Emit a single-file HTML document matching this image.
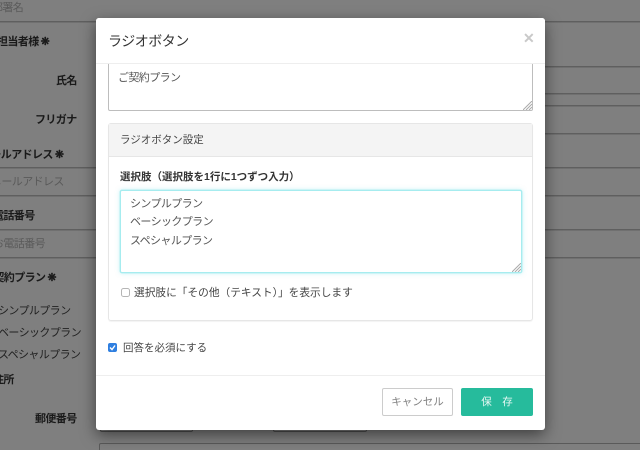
<!DOCTYPE html>
<html lang="ja">
<head>
<meta charset="utf-8">
<style>
html,body{margin:0;padding:0;width:640px;height:450px;overflow:hidden;background:#7f7f7f;}
*{box-sizing:border-box;}
body{font-family:"Liberation Sans","Noto Sans CJK JP",sans-serif;position:relative;color:#333;}
#wrap{position:absolute;left:0;top:0;width:640px;height:450px;overflow:hidden;filter:blur(.35px);}
.a{position:absolute;white-space:nowrap;line-height:16px;}
.ln{position:absolute;height:1px;background:#5f5f5f;box-shadow:0 1px 0 #707070;}
.bg{font-size:11px;letter-spacing:-.6px;color:#1a1a1a;font-weight:bold;}
.ph{font-size:11px;letter-spacing:-.6px;color:#5a5a5a;}
.rd{font-size:11px;letter-spacing:-.6px;color:#222;}
.t{font-size:11px;letter-spacing:-.6px;color:#555;}
#modal{position:absolute;left:96px;top:18px;width:449px;height:412px;background:#fff;border-radius:3px;box-shadow:0 5px 15px rgba(0,0,0,.5);overflow:hidden;}
.ta{position:absolute;background:#fff;}
.rz{position:absolute;right:0;bottom:0;}
</style>
</head>
<body>
<div id="wrap">
<!-- background page -->
<div class="ln" style="left:0;top:21px;width:640px"></div>
<div class="ln" style="left:545px;top:66px;width:95px"></div>
<div class="ln" style="left:545px;top:93px;width:95px"></div>
<div class="ln" style="left:545px;top:105px;width:95px"></div>
<div class="ln" style="left:545px;top:133px;width:95px"></div>
<div class="ln" style="left:0;top:167px;width:640px"></div>
<div class="ln" style="left:0;top:195px;width:640px"></div>
<div class="ln" style="left:0;top:229px;width:640px"></div>
<div class="ln" style="left:0;top:257px;width:640px"></div>
<div class="a ph" style="left:-8px;top:0px">部署名</div>
<div class="a bg" style="left:-3px;top:34px">担当者様<span style="margin-left:2px">❋</span></div>
<div class="a bg" style="left:56px;top:73px">氏名</div>
<div class="a bg" style="left:35px;top:112px">フリガナ</div>
<div class="a bg" style="left:-20px;top:147px">メールアドレス<span style="margin-left:2px">❋</span></div>
<div class="a ph" style="left:-9px;top:174px">メールアドレス</div>
<div class="a bg" style="left:-7px;top:208px">電話番号</div>
<div class="a ph" style="left:-7px;top:236px">お電話番号</div>
<div class="a bg" style="left:-17px;top:270px">ご契約プラン<span style="margin-left:2px">❋</span></div>
<div class="a rd" style="left:-2px;top:303px">シンプルプラン</div>
<div class="a rd" style="left:-2px;top:325px">ベーシックプラン</div>
<div class="a rd" style="left:-2px;top:347px">スペシャルプラン</div>
<div class="a bg" style="left:-7px;top:372px">住所</div>
<div class="a bg" style="left:35px;top:411px">郵便番号</div>
<div style="position:absolute;left:100px;top:420px;width:93px;height:12px;border:1px solid #4f4f4f;border-radius:2px"></div>
<div style="position:absolute;left:273px;top:420px;width:94px;height:12px;border:1px solid #4f4f4f;border-radius:2px"></div>
<div style="position:absolute;left:99px;top:443px;width:560px;height:20px;border:1px solid #5a5a5a;border-radius:2px"></div>

<!-- modal -->
<div id="modal">
  <!-- top textarea -->
  <div class="ta" style="left:12px;top:30px;width:425px;height:63px;border:1px solid #bdbdbd;border-radius:2px">
    <div class="a t" style="left:9px;top:21px">ご契約プラン</div>
    <svg class="rz" width="9" height="9" viewBox="0 0 9 9"><path d="M0 9L9 0M3 9L9 3M6 9L9 6" stroke="#aaa" stroke-width="1" fill="none"/></svg>
  </div>
  <!-- header -->
  <div style="position:absolute;left:0;top:0;width:449px;height:46px;background:#fff;border-bottom:1px solid #eee"></div>
  <div class="a" style="left:12px;top:14px;font-size:14px;letter-spacing:-.5px;line-height:18px;color:#333">ラジオボタン</div>
  <div class="a" style="left:427px;top:12px;font-size:14px;font-weight:bold;color:#c9c9c9">✕</div>
  <!-- panel -->
  <div style="position:absolute;left:12px;top:105px;width:425px;height:198px;border:1px solid #e6e6e6;border-radius:3px;box-shadow:0 1px 1px rgba(0,0,0,.05)">
    <div style="position:absolute;left:0;top:0;width:423px;height:33px;background:#f4f4f4;border-bottom:1px solid #e6e6e6"></div>
    <div class="a" style="left:11px;top:8px;font-size:10.5px;color:#444">ラジオボタン設定</div>
    <div class="a" style="left:11px;top:45px;font-size:10.5px;font-weight:bold;color:#333">選択肢（選択肢を1行に1つずつ入力）</div>
    <div class="ta" style="left:11px;top:66px;width:402px;height:83px;border:1px solid #a6ecef;border-radius:2px;box-shadow:0 0 0 .5px #b8f0f2,0 0 5px rgba(120,225,235,.5)">
      <div class="a t" style="left:9px;top:5px">シンプルプラン</div>
      <div class="a t" style="left:9px;top:23px">ベーシックプラン</div>
      <div class="a t" style="left:9px;top:42px">スペシャルプラン</div>
      <svg class="rz" width="9" height="9" viewBox="0 0 9 9"><path d="M0 9L9 0M3 9L9 3M6 9L9 6" stroke="#aaa" stroke-width="1" fill="none"/></svg>
    </div>
    <div style="position:absolute;left:12px;top:164px;width:9px;height:9px;background:#fff;border:1px solid #b5b5b5;border-radius:2.5px"></div>
    <div class="a" style="left:25px;top:161px;font-size:10.7px;color:#444">選択肢に「その他（テキスト）」を表示します</div>
  </div>
  <!-- required -->
  <svg style="position:absolute;left:12px;top:325px" width="9" height="9" viewBox="0 0 9 9"><rect width="9" height="9" rx="2" fill="#2f7fe0"/><path d="M2 4.5L4 6.5L7 2.5" stroke="#fff" stroke-width="1.4" fill="none"/></svg>
  <div class="a" style="left:27px;top:322px;font-size:10.5px;color:#444">回答を必須にする</div>
  <!-- footer -->
  <div style="position:absolute;left:0;top:357px;width:449px;height:1px;background:#eee"></div>
  <div class="a" style="left:286px;top:370px;width:71px;height:28px;border:1px solid #ccc;border-radius:2px;background:#fff;color:#808080;font-size:10.5px;line-height:26px;text-align:center">キャンセル</div>
  <div class="a" style="left:365px;top:370px;width:72px;height:28px;border-radius:2px;background:#26bb9c;color:#e8f8f4;font-size:10.5px;line-height:28px;text-align:center">保　存</div>
</div>
</div>
</body>
</html>
